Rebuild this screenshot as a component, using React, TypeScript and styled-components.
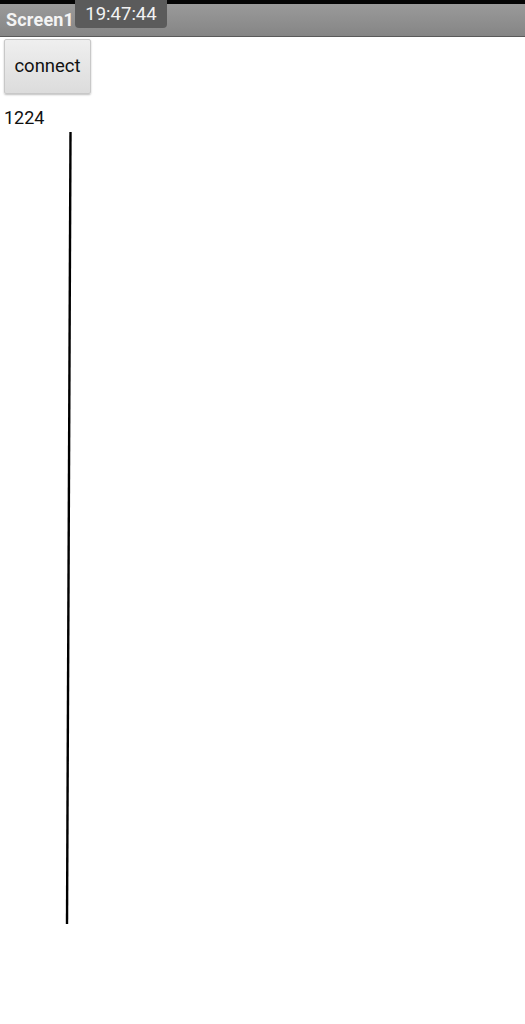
import styled, { createGlobalStyle } from "styled-components";

const GlobalStyle = createGlobalStyle`
    html, body {
        margin: 0;
        padding: 0;
        background: #ffffff;
        font-family: Roboto, "Liberation Sans", Arial, sans-serif;
    }
`;

const Screen = styled.div`
    position: relative;
    width: 525px;
    height: 1024px;
    overflow: hidden;
    background: #ffffff;
`;

const StatusStrip = styled.div`
    height: 4px;
    background: #050505;
`;

const TitleBar = styled.header`
    display: flex;
    align-items: center;
    height: 32px;
    padding-left: 6px;
    background: linear-gradient(#9a9a9a, #858585);
    border-bottom: 1px solid #5a5a5a;
`;

const Title = styled.h1`
    margin: 0;
    font: normal normal 700 18px/1 Roboto, "Liberation Sans", sans-serif;
    color: #f4f4f4;
    letter-spacing: 0.2px;
`;

const Clock = styled.div`
    position: absolute;
    top: 0;
    left: 75px;
    width: 92px;
    height: 28px;
    display: flex;
    align-items: center;
    justify-content: center;
    background: #5b5b5b;
    border-radius: 0 0 4px 4px;
    font: normal normal 400 18.5px/1 Roboto, "Liberation Sans", sans-serif;
    color: #f2f2f2;
`;

const Content = styled.main`
    display: flex;
    flex-direction: column;
    align-items: flex-start;
    padding: 2px 4px 0;
`;

const ConnectButton = styled.button`
    width: 87px;
    height: 55px;
    padding: 0;
    background: linear-gradient(#efefef, #dcdcdc);
    border: 1px solid #c8c8c8;
    border-radius: 2px;
    box-shadow: 0 1px 2px #00000040;
    font: normal normal 400 18.5px/1 Roboto, "Liberation Sans", sans-serif;
    color: #111111;
`;

const Reading = styled.span`
    margin-top: 13px;
    font: normal normal 400 18px/22px Roboto, "Liberation Sans", sans-serif;
    color: #111111;
`;

const Canvas = styled.svg`
    display: block;
    width: 525px;
    height: 895px;
    margin-left: -4px;
`;

const App = () => {
    return (
        <Screen>
            <GlobalStyle />
            <StatusStrip />
            <TitleBar>
                <Title>Screen1</Title>
            </TitleBar>
            <Clock>19:47:44</Clock>
            <Content>
                <ConnectButton>connect</ConnectButton>
                <Reading>1224</Reading>
                <Canvas viewBox="0 0 525 895">
                    <line x1="70.5" y1="3" x2="67" y2="795" stroke="#000" strokeWidth="2.4" />
                </Canvas>
            </Content>
        </Screen>
    );
};

export default App;
